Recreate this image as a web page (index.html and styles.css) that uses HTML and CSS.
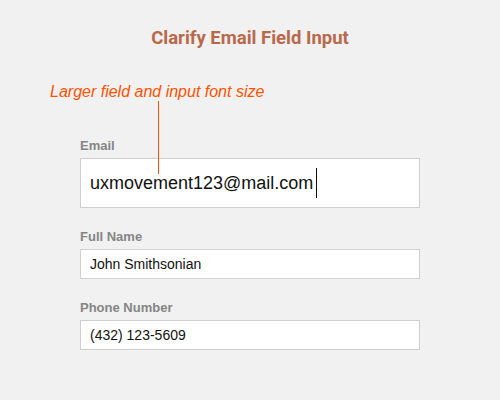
FILE: index.html
```html
<!DOCTYPE html>
<html>
<head>
<meta charset="utf-8">
<link rel="stylesheet" href="styles.css">
</head>
<body>
<div class="page">
  <h1 class="title">Clarify Email Field Input</h1>
  <p class="note">Larger field and input font size</p>
  <form class="form">
    <div class="field">
      <label class="label">Email</label>
      <div class="input input-lg"><span>uxmovement123@mail.com</span><span class="caret"></span></div>
    </div>
    <div class="field">
      <label class="label">Full Name</label>
      <div class="input">John Smithsonian</div>
    </div>
    <div class="field">
      <label class="label">Phone Number</label>
      <div class="input">(432) 123-5609</div>
    </div>
  </form>
  <div class="pointer"></div>
</div>
</body>
</html>
```
FILE: styles.css
```css
html, body {
  margin: 0;
  padding: 0;
  background: #f1f1f1;
}
.page {
  position: relative;
  width: 500px;
  height: 400px;
  font-family: "Liberation Sans", Arial, sans-serif;
}
.title {
  margin: 0;
  padding-top: 27px;
  text-align: center;
  font-family: Roboto, sans-serif;
  font-weight: 700;
  font-size: 18.5px;
  line-height: 22px;
  color: #b9694a;
}
.note {
  margin: 34px 0 0 50px;
  font-style: italic;
  font-size: 16px;
  line-height: 18px;
  color: #ff5200;
}
.form {
  display: flex;
  flex-direction: column;
  gap: 21px;
  margin: 37px 0 0 80px;
  width: 340px;
}
.field {
  display: flex;
  flex-direction: column;
  gap: 4px;
}
.label {
  font-weight: 700;
  font-size: 13px;
  line-height: 16px;
  color: #858585;
}
.input {
  box-sizing: border-box;
  height: 30px;
  border: 1px solid #cfcfcf;
  background: #fff;
  padding: 0 9px;
  display: flex;
  align-items: center;
  font-size: 14px;
  color: #111;
}
.input-lg {
  height: 50px;
  font-size: 18px;
}
.caret {
  display: inline-block;
  width: 1px;
  height: 30px;
  background: #111;
  margin-left: 3px;
}
.pointer {
  position: absolute;
  left: 158px;
  top: 101px;
  width: 1px;
  height: 73px;
  background: #ff5200;
}
```
